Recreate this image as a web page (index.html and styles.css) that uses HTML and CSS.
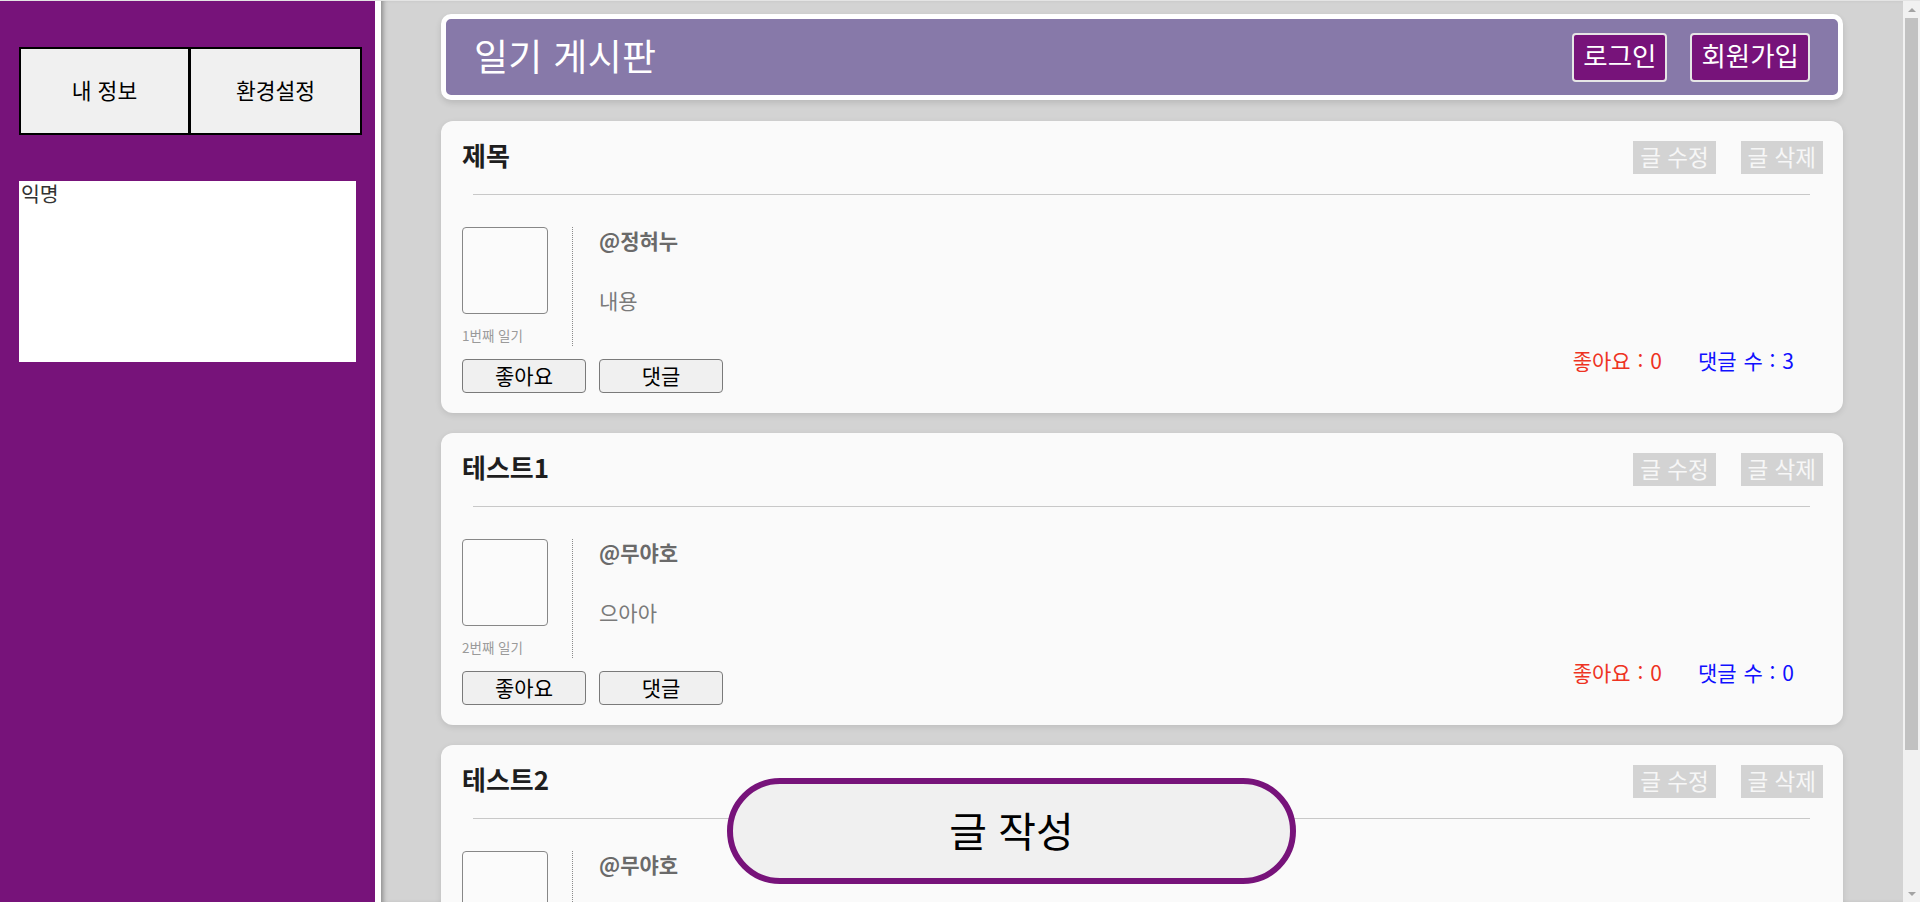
FILE: index.html
```html
<!DOCTYPE html>
<html lang="ko">
<head>
<meta charset="utf-8">
<title>일기 게시판</title>
<link rel="stylesheet" href="styles.css">
</head>
<body>
<div class="app">
  <aside class="sidebar">
    <div class="side-buttons">
      <button class="side-btn">내 정보</button>
      <button class="side-btn side-btn-second">환경설정</button>
    </div>
    <div class="profile-box">익명</div>
  </aside>
  <main class="main">
    <header class="board-header">
      <h1 class="board-title">일기 게시판</h1>
      <div class="auth">
        <button class="auth-btn">로그인</button>
        <button class="auth-btn">회원가입</button>
      </div>
    </header>

    <article class="card">
      <div class="card-top">
        <h2 class="card-title">제목</h2>
        <div class="card-actions">
          <button class="edit-btn">글 수정</button>
          <button class="edit-btn">글 삭제</button>
        </div>
      </div>
      <hr class="sep">
      <div class="card-body">
        <div class="thumb-col">
          <div class="thumb"></div>
          <div class="caption">1번째 일기</div>
        </div>
        <div class="text-col">
          <div class="author">@정혀누</div>
          <div class="content">내용</div>
        </div>
      </div>
      <div class="card-bottom">
        <button class="act-btn">좋아요</button>
        <button class="act-btn">댓글</button>
        <div class="counts">
          <span class="likes">좋아요 : 0</span>
          <span class="comments">댓글 수 : 3</span>
        </div>
      </div>
    </article>

    <article class="card">
      <div class="card-top">
        <h2 class="card-title">테스트1</h2>
        <div class="card-actions">
          <button class="edit-btn">글 수정</button>
          <button class="edit-btn">글 삭제</button>
        </div>
      </div>
      <hr class="sep">
      <div class="card-body">
        <div class="thumb-col">
          <div class="thumb"></div>
          <div class="caption">2번째 일기</div>
        </div>
        <div class="text-col">
          <div class="author">@무야호</div>
          <div class="content">으아아</div>
        </div>
      </div>
      <div class="card-bottom">
        <button class="act-btn">좋아요</button>
        <button class="act-btn">댓글</button>
        <div class="counts">
          <span class="likes">좋아요 : 0</span>
          <span class="comments">댓글 수 : 0</span>
        </div>
      </div>
    </article>

    <article class="card">
      <div class="card-top">
        <h2 class="card-title">테스트2</h2>
        <div class="card-actions">
          <button class="edit-btn">글 수정</button>
          <button class="edit-btn">글 삭제</button>
        </div>
      </div>
      <hr class="sep">
      <div class="card-body">
        <div class="thumb-col">
          <div class="thumb"></div>
          <div class="caption">3번째 일기</div>
        </div>
        <div class="text-col">
          <div class="author">@무야호</div>
          <div class="content">테스트</div>
        </div>
      </div>
      <div class="card-bottom">
        <button class="act-btn">좋아요</button>
        <button class="act-btn">댓글</button>
        <div class="counts">
          <span class="likes">좋아요 : 0</span>
          <span class="comments">댓글 수 : 0</span>
        </div>
      </div>
    </article>
  </main>
  <div class="scrollbar" aria-hidden="true">
    <div class="sb-btn"><span class="sb-arrow-up"></span></div>
    <div class="sb-track">
      <div class="sb-thumb"></div>
    </div>
    <div class="sb-btn"><span class="sb-arrow-down"></span></div>
  </div>
  <button class="write-btn">글 작성</button>
</div>
</body>
</html>
```

FILE: styles.css
```css
* { box-sizing: border-box; }

html, body {
  margin: 0;
  padding: 0;
  height: 100%;
  overflow: hidden;
}

body {
  font-family: "Noto Sans CJK KR", "Noto Sans", sans-serif;
  background: #d3d3d3;
}

button {
  font-family: inherit;
  cursor: pointer;
}

.app {
  display: flex;
  height: 100vh;
  border-top: 1px solid #e4e4e4;
}

/* ---------- sidebar ---------- */
.sidebar {
  width: 381px;
  flex: 0 0 381px;
  background: #77137a;
  border-right: 6px solid #ffffff;
  padding: 46px 0 0 19px;
}

.side-buttons {
  display: flex;
}

.side-btn {
  width: 171px;
  height: 88px;
  border: 2px solid #000;
  background: #f0f0f0;
  color: #000;
  font-size: 21.5px;
  padding: 0 0 3px 0;
  margin: 0;
}

.side-btn-second {
  margin-left: -1px;
  width: 173px;
}

.profile-box {
  margin-top: 46px;
  width: 337px;
  height: 181px;
  background: #ffffff;
  color: #333;
  font-size: 20.5px;
  line-height: 22px;
  padding: 1px 2px 0;
}

/* ---------- main ---------- */
.main {
  flex: 1;
  height: 100%;
  overflow: hidden;
  padding: 13px 60px 13px 60px;
  box-shadow: inset 5px 0 5px -3px rgba(0, 0, 0, 0.35);
}

/* ---------- fake window scrollbar ---------- */
.scrollbar {
  flex: 0 0 17px;
  width: 17px;
  height: 100%;
  background: #f1f1f1;
  display: flex;
  flex-direction: column;
}

.sb-btn {
  height: 17px;
  flex: 0 0 17px;
  display: flex;
  align-items: center;
  justify-content: center;
}

.sb-arrow-up {
  width: 0;
  height: 0;
  border-left: 4px solid transparent;
  border-right: 4px solid transparent;
  border-bottom: 4px solid #a3a3a3;
}

.sb-arrow-down {
  width: 0;
  height: 0;
  border-left: 4px solid transparent;
  border-right: 4px solid transparent;
  border-top: 4px solid #a3a3a3;
}

.sb-track {
  flex: 1;
  padding: 0 2px;
}

.sb-thumb {
  height: 732px;
  background: #c1c1c1;
}

/* ---------- header ---------- */
.board-header {
  height: 86px;
  border: 5px solid #ffffff;
  border-radius: 10px;
  background: #8779a9;
  display: flex;
  align-items: center;
  justify-content: space-between;
  padding: 0 28px 0 28px;
  margin-bottom: 21px;
  box-shadow: 0 3px 6px rgba(0, 0, 0, 0.12);
}

.board-title {
  margin: -4px 0 0 0;
  color: #ffffff;
  font-size: 37px;
  font-weight: 400;
  letter-spacing: 0.3px;
}

.auth {
  display: flex;
  gap: 23px;
}

.auth-btn {
  height: 49px;
  padding: 0 9px 3px;
  background: #77137a;
  color: #ffffff;
  border: 2px solid #e6e6e6;
  border-radius: 4px;
  font-size: 26.5px;
  line-height: 1;
}

/* ---------- cards ---------- */
.card {
  background: #fafafa;
  border-radius: 12px;
  padding: 20px 20px 20px 21px;
  margin-bottom: 20px;
  box-shadow: 0 2px 6px rgba(0, 0, 0, 0.1);
}

.card-top {
  display: flex;
  align-items: center;
  justify-content: space-between;
  height: 33px;
}

.card-title {
  margin: -6px 0 0 0;
  font-size: 26px;
  font-weight: 700;
  color: #1e1e1e;
}

.card-actions {
  display: flex;
  gap: 25px;
}

.edit-btn {
  height: 33px;
  padding: 0 7px 3px;
  border: none;
  background: #d3d3d3;
  color: #f7f7f7;
  font-size: 22.5px;
  line-height: 1;
}

.sep {
  margin: 20px 13px 32px 11px;
  border: none;
  border-top: 1px solid #c8c8c8;
  height: 0;
}

.card-body {
  display: flex;
}

.thumb-col {
  width: 110px;
  height: 119px;
  flex: 0 0 110px;
}

.thumb {
  width: 86px;
  height: 87px;
  border: 1.5px solid #878787;
  border-radius: 4px;
  background: #fbfbfb;
}

.caption {
  margin-top: 11px;
  font-size: 13.5px;
  line-height: 20px;
  color: #9a9a9a;
  white-space: nowrap;
}

.text-col {
  border-left: 1px dotted #8a8a8a;
  padding-left: 26px;
  height: 119px;
}

.author {
  margin-top: -2px;
  font-size: 21px;
  font-weight: 700;
  color: #6a6a6a;
  line-height: 30px;
}

.content {
  margin-top: 30px;
  font-size: 21px;
  color: #7a7a7a;
  line-height: 30px;
}

.card-bottom {
  display: flex;
  align-items: flex-start;
  gap: 13px;
  margin-top: 13px;
}

.act-btn {
  width: 124px;
  height: 34px;
  background: #f0f0f0;
  border: 1px solid #7a7a7a;
  border-radius: 4px;
  color: #000;
  font-size: 21px;
  line-height: 1;
  padding: 0 0 2px 0;
}

.counts {
  margin-left: auto;
  margin-right: 29px;
  margin-top: -13px;
  display: flex;
  gap: 36px;
  font-size: 21px;
  line-height: 28px;
  word-spacing: 1px;
}

.likes { color: #ee3322; }
.comments { color: #1010ff; }

/* ---------- floating write button ---------- */
.write-btn {
  position: fixed;
  left: 727px;
  bottom: 18px;
  width: 569px;
  height: 106px;
  border: 6px solid #77137a;
  border-radius: 53px;
  background: #f0f0f0;
  color: #000;
  font-size: 41px;
  line-height: 1;
  padding: 0 0 4px 0;
  z-index: 5;
}
```
